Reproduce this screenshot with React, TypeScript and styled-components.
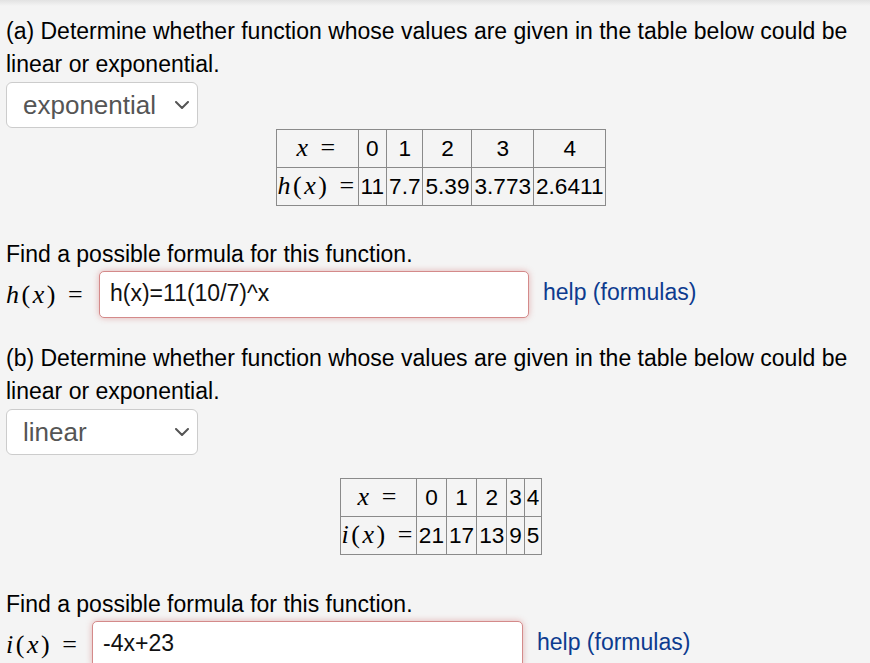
import React from "react";
import styled, { createGlobalStyle } from "styled-components";

const Global = createGlobalStyle`
  html, body { margin: 0; padding: 0; background: #f4f4f4; }
  body { font-family: "Liberation Sans", Arial, sans-serif; font-size: 23px; color: #000; }
`;

const Page = styled.div`
  position: relative;
  min-height: 663px;
  padding: 15px 6px 0 6px;
  box-sizing: border-box;
  background: #f4f4f4;
  &::before {
    content: "";
    position: absolute;
    left: 0; right: 0; top: 0;
    height: 6px;
    background: linear-gradient(#e2e2e2, #f4f4f4);
  }
`;

const Para = styled.div<{ $mt?: number }>`
  line-height: 33px;
  margin-top: ${(p) => p.$mt ?? 0}px;
  white-space: nowrap;
`;

const SelectBox = styled.div<{ $mt?: number }>`
  margin-top: ${(p) => p.$mt ?? 0}px;
  width: 192px;
  height: 46px;
  box-sizing: border-box;
  border: 1px solid #cccccc;
  border-radius: 6px;
  background: #fff;
  display: flex;
  align-items: center;
  justify-content: space-between;
  padding: 0 8px 0 16px;
  color: #555;
  font-size: 26px;
`;

const TableWrap = styled.div<{ $mt?: number }>`
  margin-top: ${(p) => p.$mt ?? 0}px;
  display: flex;
  justify-content: center;
  padding-left: 12px;
`;

const Table = styled.table`
  border-collapse: collapse;
  font-size: 22.6px;
`;

const Cell = styled.td`
  border: 1px solid #8a8a8a;
  text-align: center;
  padding: 0 2px;
  height: 36px;
  line-height: 36px;
  white-space: nowrap;
`;

const MathCell = styled(Cell)`
  padding: 0 1px;
`;

const Math = styled.span`
  font-family: "Liberation Serif", "Times New Roman", serif;
  font-size: 26px;
  letter-spacing: 2.5px;
  white-space: nowrap;
`;

const MI = styled.i`
  font-style: italic;
`;

const Eq = styled.span`
  margin: 0 0 0 10px;
`;

const InputRow = styled.div`
  display: flex;
  align-items: center;
  height: 47px;
`;

const Label = styled.span<{ $w: number }>`
  width: ${(p) => p.$w}px;
  flex: none;
`;

const Field = styled.input<{ $w: number }>`
  width: ${(p) => p.$w}px;
  height: 47px;
  box-sizing: border-box;
  border: 1px solid #d48a8a;
  border-radius: 5px;
  box-shadow: 0 0 6px rgba(200, 60, 60, 0.35);
  background: #fff;
  font-family: "Liberation Sans", Arial, sans-serif;
  font-size: 23px;
  color: #111;
  padding: 0 10px 3px 10px;
  outline: none;
`;

const Help = styled.a`
  margin-left: 14px;
  margin-bottom: 4px;
  color: #0d3b8f;
  text-decoration: none;
  font-size: 23px;
`;

const Chevron = () => (
  <svg width="14" height="8" viewBox="0 0 14 8" fill="none">
    <path d="M1 1 L7 7 L13 1" stroke="#555" strokeWidth="2" strokeLinecap="round" strokeLinejoin="round" />
  </svg>
);

const FnLabel = ({ f }: { f: string }) => (
  <Math>
    <MI>{f}</MI>(<MI>x</MI>)<Eq>=</Eq>
  </Math>
);

const XLabel = () => (
  <Math>
    <MI>x</MI>
    <Eq>=</Eq>
  </Math>
);

const ValueTable = ({ f, xs, ys }: { f: string; xs: string[]; ys: string[] }) => (
  <Table>
    <tbody>
      <tr>
        <MathCell>
          <XLabel />
        </MathCell>
        {xs.map((x, i) => (
          <Cell key={i}>{x}</Cell>
        ))}
      </tr>
      <tr>
        <MathCell>
          <FnLabel f={f} />
        </MathCell>
        {ys.map((y, i) => (
          <Cell key={i}>{y}</Cell>
        ))}
      </tr>
    </tbody>
  </Table>
);

export default function App() {
  return (
    <>
      <Global />
      <Page>
        <Para>(a) Determine whether function whose values are given in the table below could be</Para>
        <Para>linear or exponential.</Para>
        <SelectBox $mt={1}>
          <span>exponential</span>
          <Chevron />
        </SelectBox>
        <TableWrap $mt={1}>
          <ValueTable f="h" xs={["0", "1", "2", "3", "4"]} ys={["11", "7.7", "5.39", "3.773", "2.6411"]} />
        </TableWrap>
        <Para $mt={32}>Find a possible formula for this function.</Para>
        <InputRow>
          <Label $w={93}>
            <FnLabel f="h" />
          </Label>
          <Field $w={430} readOnly value="h(x)=11(10/7)^x" />
          <Help href="#">help (formulas)</Help>
        </InputRow>
        <Para $mt={24}>(b) Determine whether function whose values are given in the table below could be</Para>
        <Para>linear or exponential.</Para>
        <SelectBox $mt={1}>
          <span>linear</span>
          <Chevron />
        </SelectBox>
        <TableWrap $mt={23}>
          <ValueTable f="i" xs={["0", "1", "2", "3", "4"]} ys={["21", "17", "13", "9", "5"]} />
        </TableWrap>
        <Para $mt={33}>Find a possible formula for this function.</Para>
        <InputRow>
          <Label $w={86}>
            <FnLabel f="i" />
          </Label>
          <Field $w={431} readOnly value="-4x+23" />
          <Help href="#">help (formulas)</Help>
        </InputRow>
      </Page>
    </>
  );
}
